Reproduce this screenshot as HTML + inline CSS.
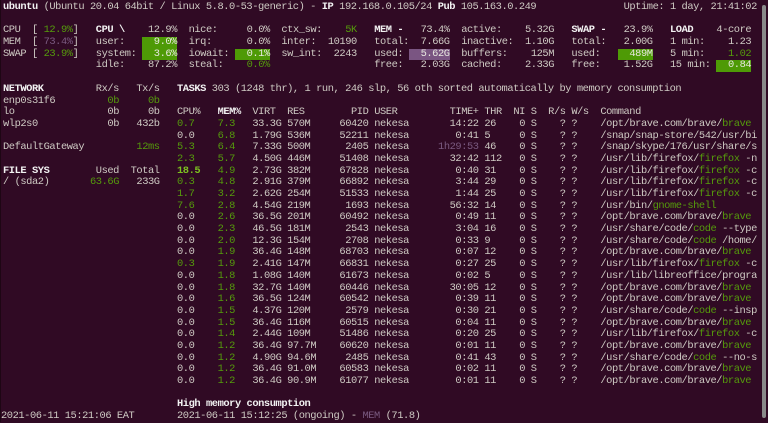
<!DOCTYPE html>
<html><head><meta charset="utf-8">
<style>
html,body{margin:0;padding:0;}
body{width:768px;height:422px;background:#300a24;overflow:hidden;position:relative;
font-family:"Liberation Mono","DejaVu Sans Mono",monospace;font-size:10.4px;letter-spacing:-0.44px;color:#cfcbc4;}
#w{padding-top:2px;}
.r{position:relative;height:11.7px;line-height:11.7px;}
.r i{font-style:normal;position:absolute;top:0;white-space:pre;left:calc(3px + var(--c)*5.8px);}
.r i.R{left:auto;right:calc(765px - var(--e)*5.8px);}
.g{color:#559b0c;}
.p{color:#7a5a80;}
.b{font-weight:bold;color:#f2f2f2;}
.gb{background:#4e9a06;color:#e8e8e0;}
.pb{background:#7a5582;color:#e8e8e0;}
#sb{position:absolute;left:762px;top:5px;width:4px;height:413px;background:#8a8a8a;border-radius:2px;}
#lb{position:absolute;left:0;top:0;width:1px;height:422px;background:#1e0614;}
</style></head><body>
<div id="lb"></div>
<div id="w">
<div class="r"><i style="--c:0"><span class="b">ubuntu</span> (Ubuntu 20.04 64bit / Linux 5.8.0-53-generic) - <span class="b">IP</span> 192.168.0.105/24 <span class="b">Pub</span> 105.163.0.249</i><i style="--c:107">Uptime: 1 day, 21:41:02</i></div>
<div class="r"></div>
<div class="r"><i style="--c:0">CPU  [ <span class="g">12.9%</span>]</i><i style="--c:16" class="b">CPU \</i><i class="R" style="--e:30">12.9%</i><i style="--c:32">nice:</i><i class="R" style="--e:46">0.0%</i><i style="--c:48">ctx_sw:</i><i class="R g" style="--e:61">5K</i><i style="--c:64" class="b">MEM -</i><i class="R" style="--e:77">73.4%</i><i style="--c:79">active:</i><i class="R" style="--e:95">5.32G</i><i style="--c:98" class="b">SWAP -</i><i class="R" style="--e:112">23.9%</i><i style="--c:115" class="b">LOAD</i><i class="R" style="--e:129">4-core</i></div>
<div class="r"><i style="--c:0">MEM  [ <span class="p">73.4%</span>]</i><i style="--c:16">user:</i><i class="gb" style="--c:24">  9.0%</i><i style="--c:32">irq:</i><i class="R" style="--e:46">0.0%</i><i style="--c:48">inter:</i><i class="R" style="--e:61">10190</i><i style="--c:64">total:</i><i class="R" style="--e:77">7.66G</i><i style="--c:79">inactive:</i><i class="R" style="--e:95">1.10G</i><i style="--c:98">total:</i><i class="R" style="--e:112">2.00G</i><i style="--c:115">1 min:</i><i class="R" style="--e:129">1.23</i></div>
<div class="r"><i style="--c:0">SWAP [ <span class="g">23.9%</span>]</i><i style="--c:16">system:</i><i class="gb" style="--c:24">  3.6%</i><i style="--c:32">iowait:</i><i class="gb" style="--c:40">  0.1%</i><i style="--c:48">sw_int:</i><i class="R" style="--e:61">2243</i><i style="--c:64">used:</i><i class="pb" style="--c:70">  5.62G</i><i style="--c:79">buffers:</i><i class="R" style="--e:95">125M</i><i style="--c:98">used:</i><i class="gb" style="--c:106">  489M</i><i style="--c:115">5 min:</i><i class="R g" style="--e:129">1.02</i></div>
<div class="r"><i style="--c:16">idle:</i><i class="R" style="--e:30">87.2%</i><i style="--c:32">steal:</i><i class="R g" style="--e:46">0.0%</i><i style="--c:64">free:</i><i class="R" style="--e:77">2.03G</i><i style="--c:79">cached:</i><i class="R" style="--e:95">2.33G</i><i style="--c:98">free:</i><i class="R" style="--e:112">1.52G</i><i style="--c:115">15 min:</i><i class="gb" style="--c:123">  0.84</i></div>
<div class="r"></div>
<div class="r"><i style="--c:0" class="b">NETWORK</i><i style="--c:16">Rx/s</i><i style="--c:23">Tx/s</i><i style="--c:30"><span class="b">TASKS</span> 303 (1248 thr), 1 run, 246 slp, 56 oth sorted automatically by memory consumption</i></div>
<div class="r"><i style="--c:0">enp0s31f6</i><i class="R g" style="--e:20">0b</i><i class="R g" style="--e:27">0b</i></div>
<div class="r"><i style="--c:0">lo</i><i class="R" style="--e:20">0b</i><i class="R" style="--e:27">0b</i><i style="--c:30">CPU%</i><i style="--c:37" class="b">MEM%</i><i style="--c:43">VIRT  RES</i><i class="R" style="--e:63">PID</i><i style="--c:64">USER</i><i class="R" style="--e:82">TIME+</i><i style="--c:83">THR</i><i style="--c:88">NI S  R/s W/s  Command</i></div>
<div class="r"><i style="--c:0">wlp2s0</i><i class="R" style="--e:20">0b</i><i class="R" style="--e:27">432b</i><i style="--c:30" class="g">0.7</i><i style="--c:37" class="g">7.3</i><i style="--c:43">33.3G 570M</i><i class="R" style="--e:63">60420</i><i style="--c:64">nekesa</i><i class="R" style="--e:82">14:22</i><i style="--c:83">26</i><i style="--c:89">0 S    ? ?</i><i style="--c:103">/opt/brave.com/brave/<span class="g">brave</span></i></div>
<div class="r"><i style="--c:30">0.0</i><i style="--c:37" class="g">6.8</i><i style="--c:43">1.79G 536M</i><i class="R" style="--e:63">52211</i><i style="--c:64">nekesa</i><i class="R" style="--e:82">0:41</i><i style="--c:83">5</i><i style="--c:89">0 S    ? ?</i><i style="--c:103">/snap/snap-store/542/usr/bi</i></div>
<div class="r"><i style="--c:0">DefaultGateway</i><i class="R g" style="--e:27">12ms</i><i style="--c:30" class="g">5.3</i><i style="--c:37" class="g">6.4</i><i style="--c:43">7.33G 500M</i><i class="R" style="--e:63">2405</i><i style="--c:64">nekesa</i><i class="R p" style="--e:82">1h29:53</i><i style="--c:83">46</i><i style="--c:89">0 S    ? ?</i><i style="--c:103">/snap/skype/176/usr/share/s</i></div>
<div class="r"><i style="--c:30" class="g">2.3</i><i style="--c:37" class="g">5.7</i><i style="--c:43">4.50G 446M</i><i class="R" style="--e:63">51408</i><i style="--c:64">nekesa</i><i class="R" style="--e:82">32:42</i><i style="--c:83">112</i><i style="--c:89">0 S    ? ?</i><i style="--c:103">/usr/lib/firefox/<span class="g">firefox</span> -n</i></div>
<div class="r"><i style="--c:0" class="b">FILE SYS</i><i style="--c:16">Used</i><i style="--c:22">Total</i><i style="--c:30;color:#7cc020;font-weight:bold">18.5</i><i style="--c:37" class="g">4.9</i><i style="--c:43">2.73G 382M</i><i class="R" style="--e:63">67828</i><i style="--c:64">nekesa</i><i class="R" style="--e:82">0:40</i><i style="--c:83">31</i><i style="--c:89">0 S    ? ?</i><i style="--c:103">/usr/lib/firefox/<span class="g">firefox</span> -c</i></div>
<div class="r"><i style="--c:0">/ (sda2)</i><i class="R g" style="--e:20">63.6G</i><i class="R" style="--e:27">233G</i><i style="--c:30" class="g">0.3</i><i style="--c:37" class="g">4.8</i><i style="--c:43">2.91G 379M</i><i class="R" style="--e:63">66892</i><i style="--c:64">nekesa</i><i class="R" style="--e:82">3:44</i><i style="--c:83">29</i><i style="--c:89">0 S    ? ?</i><i style="--c:103">/usr/lib/firefox/<span class="g">firefox</span> -c</i></div>
<div class="r"><i style="--c:30" class="g">1.7</i><i style="--c:37" class="g">3.2</i><i style="--c:43">2.62G 254M</i><i class="R" style="--e:63">51533</i><i style="--c:64">nekesa</i><i class="R" style="--e:82">1:44</i><i style="--c:83">25</i><i style="--c:89">0 S    ? ?</i><i style="--c:103">/usr/lib/firefox/<span class="g">firefox</span> -c</i></div>
<div class="r"><i style="--c:30" class="g">7.6</i><i style="--c:37" class="g">2.8</i><i style="--c:43">4.54G 219M</i><i class="R" style="--e:63">1693</i><i style="--c:64">nekesa</i><i class="R" style="--e:82">56:32</i><i style="--c:83">14</i><i style="--c:89">0 S    ? ?</i><i style="--c:103">/usr/bin/<span class="g">gnome-shell</span></i></div>
<div class="r"><i style="--c:30">0.0</i><i style="--c:37" class="g">2.6</i><i style="--c:43">36.5G 201M</i><i class="R" style="--e:63">60492</i><i style="--c:64">nekesa</i><i class="R" style="--e:82">0:49</i><i style="--c:83">11</i><i style="--c:89">0 S    ? ?</i><i style="--c:103">/opt/brave.com/brave/<span class="g">brave</span></i></div>
<div class="r"><i style="--c:30">0.0</i><i style="--c:37" class="g">2.3</i><i style="--c:43">46.5G 181M</i><i class="R" style="--e:63">2543</i><i style="--c:64">nekesa</i><i class="R" style="--e:82">3:04</i><i style="--c:83">16</i><i style="--c:89">0 S    ? ?</i><i style="--c:103">/usr/share/code/<span class="g">code</span> --type</i></div>
<div class="r"><i style="--c:30">0.0</i><i style="--c:37" class="g">2.0</i><i style="--c:43">12.3G 154M</i><i class="R" style="--e:63">2708</i><i style="--c:64">nekesa</i><i class="R" style="--e:82">0:33</i><i style="--c:83">9</i><i style="--c:89">0 S    ? ?</i><i style="--c:103">/usr/share/code/<span class="g">code</span> /home/</i></div>
<div class="r"><i style="--c:30">0.0</i><i style="--c:37" class="g">1.9</i><i style="--c:43">36.4G 148M</i><i class="R" style="--e:63">68703</i><i style="--c:64">nekesa</i><i class="R" style="--e:82">0:07</i><i style="--c:83">12</i><i style="--c:89">0 S    ? ?</i><i style="--c:103">/opt/brave.com/brave/<span class="g">brave</span></i></div>
<div class="r"><i style="--c:30" class="g">0.3</i><i style="--c:37" class="g">1.9</i><i style="--c:43">2.41G 147M</i><i class="R" style="--e:63">66831</i><i style="--c:64">nekesa</i><i class="R" style="--e:82">0:27</i><i style="--c:83">25</i><i style="--c:89">0 S    ? ?</i><i style="--c:103">/usr/lib/firefox/<span class="g">firefox</span> -c</i></div>
<div class="r"><i style="--c:30">0.0</i><i style="--c:37" class="g">1.8</i><i style="--c:43">1.08G 140M</i><i class="R" style="--e:63">61673</i><i style="--c:64">nekesa</i><i class="R" style="--e:82">0:02</i><i style="--c:83">5</i><i style="--c:89">0 S    ? ?</i><i style="--c:103">/usr/lib/libreoffice/progra</i></div>
<div class="r"><i style="--c:30">0.0</i><i style="--c:37" class="g">1.8</i><i style="--c:43">32.7G 140M</i><i class="R" style="--e:63">60446</i><i style="--c:64">nekesa</i><i class="R" style="--e:82">30:05</i><i style="--c:83">12</i><i style="--c:89">0 S    ? ?</i><i style="--c:103">/opt/brave.com/brave/<span class="g">brave</span></i></div>
<div class="r"><i style="--c:30">0.0</i><i style="--c:37" class="g">1.6</i><i style="--c:43">36.5G 124M</i><i class="R" style="--e:63">60542</i><i style="--c:64">nekesa</i><i class="R" style="--e:82">0:39</i><i style="--c:83">11</i><i style="--c:89">0 S    ? ?</i><i style="--c:103">/opt/brave.com/brave/<span class="g">brave</span></i></div>
<div class="r"><i style="--c:30">0.0</i><i style="--c:37" class="g">1.5</i><i style="--c:43">4.37G 120M</i><i class="R" style="--e:63">2579</i><i style="--c:64">nekesa</i><i class="R" style="--e:82">0:30</i><i style="--c:83">21</i><i style="--c:89">0 S    ? ?</i><i style="--c:103">/usr/share/code/<span class="g">code</span> --insp</i></div>
<div class="r"><i style="--c:30">0.0</i><i style="--c:37" class="g">1.5</i><i style="--c:43">36.4G 116M</i><i class="R" style="--e:63">60515</i><i style="--c:64">nekesa</i><i class="R" style="--e:82">0:04</i><i style="--c:83">11</i><i style="--c:89">0 S    ? ?</i><i style="--c:103">/opt/brave.com/brave/<span class="g">brave</span></i></div>
<div class="r"><i style="--c:30">0.0</i><i style="--c:37" class="g">1.4</i><i style="--c:43">2.44G 109M</i><i class="R" style="--e:63">51486</i><i style="--c:64">nekesa</i><i class="R" style="--e:82">0:20</i><i style="--c:83">25</i><i style="--c:89">0 S    ? ?</i><i style="--c:103">/usr/lib/firefox/<span class="g">firefox</span> -c</i></div>
<div class="r"><i style="--c:30">0.0</i><i style="--c:37" class="g">1.2</i><i style="--c:43">36.4G 97.7M</i><i class="R" style="--e:63">60620</i><i style="--c:64">nekesa</i><i class="R" style="--e:82">0:01</i><i style="--c:83">11</i><i style="--c:89">0 S    ? ?</i><i style="--c:103">/opt/brave.com/brave/<span class="g">brave</span></i></div>
<div class="r"><i style="--c:30">0.0</i><i style="--c:37" class="g">1.2</i><i style="--c:43">4.90G 94.6M</i><i class="R" style="--e:63">2485</i><i style="--c:64">nekesa</i><i class="R" style="--e:82">0:41</i><i style="--c:83">43</i><i style="--c:89">0 S    ? ?</i><i style="--c:103">/usr/share/code/<span class="g">code</span> --no-s</i></div>
<div class="r"><i style="--c:30">0.0</i><i style="--c:37" class="g">1.2</i><i style="--c:43">36.4G 91.0M</i><i class="R" style="--e:63">60583</i><i style="--c:64">nekesa</i><i class="R" style="--e:82">0:02</i><i style="--c:83">11</i><i style="--c:89">0 S    ? ?</i><i style="--c:103">/opt/brave.com/brave/<span class="g">brave</span></i></div>
<div class="r"><i style="--c:30">0.0</i><i style="--c:37" class="g">1.2</i><i style="--c:43">36.4G 90.9M</i><i class="R" style="--e:63">61077</i><i style="--c:64">nekesa</i><i class="R" style="--e:82">0:01</i><i style="--c:83">11</i><i style="--c:89">0 S    ? ?</i><i style="--c:103">/opt/brave.com/brave/<span class="g">brave</span></i></div>
<div class="r"></div>
<div class="r"><i style="--c:30" class="b">High memory consumption</i></div>
<div class="r"><i style="--c:0;left:1px">2021-06-11 15:21:06 EAT</i><i style="--c:30">2021-06-11 15:12:25 (ongoing) - <span class="p">MEM</span> (71.8)</i></div>
</div>
<div id="sb"></div>
</body></html>
